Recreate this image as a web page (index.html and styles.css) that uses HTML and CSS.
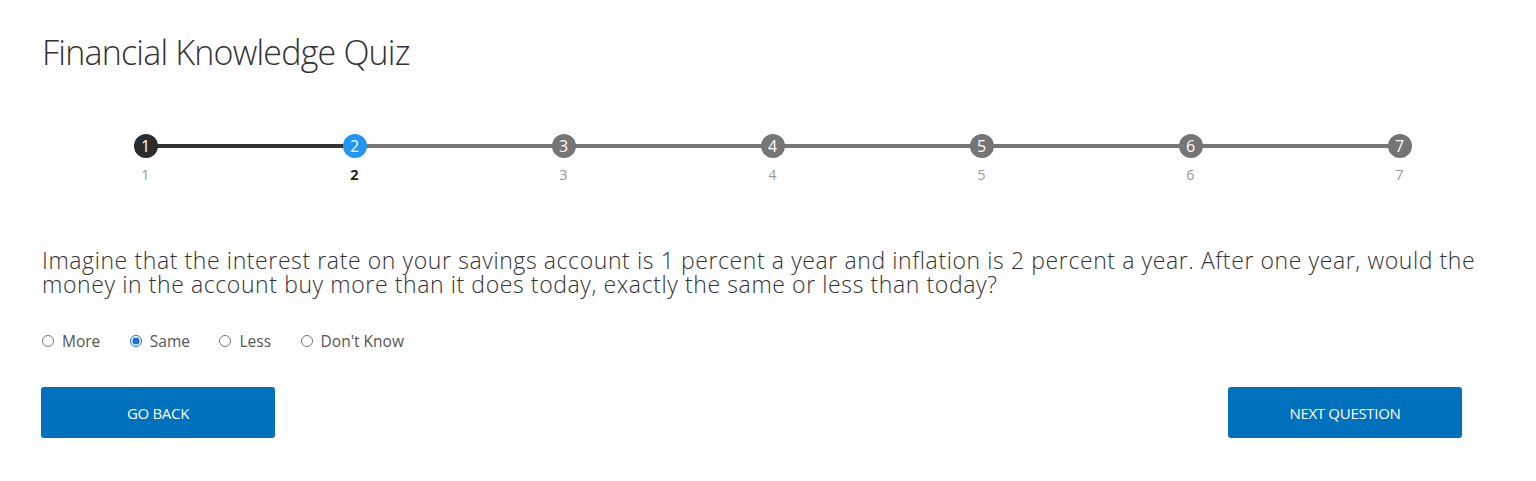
FILE: index.html
```html
<!DOCTYPE html>
<html lang="en">
<head>
<meta charset="utf-8">
<title>Financial Knowledge Quiz</title>
<link rel="stylesheet" href="styles.css">
</head>
<body>
<main class="quiz">
  <h1 class="title">Financial Knowledge Quiz</h1>

  <ol class="stepper">
    <li class="step done"><span class="dot">1</span><span class="label">1</span></li>
    <li class="step active"><span class="dot">2</span><span class="label">2</span></li>
    <li class="step"><span class="dot">3</span><span class="label">3</span></li>
    <li class="step"><span class="dot">4</span><span class="label">4</span></li>
    <li class="step"><span class="dot">5</span><span class="label">5</span></li>
    <li class="step"><span class="dot">6</span><span class="label">6</span></li>
    <li class="step last"><span class="dot">7</span><span class="label">7</span></li>
  </ol>

  <p class="question">Imagine that the interest rate on your savings account is 1 percent a year and inflation is 2 percent a year. After one year, would the money in the account buy more than it does today, exactly the same or less than today?</p>

  <div class="options">
    <label class="option"><input type="radio" name="q2" value="more"> More</label>
    <label class="option"><input type="radio" name="q2" value="same" checked> Same</label>
    <label class="option"><input type="radio" name="q2" value="less"> Less</label>
    <label class="option"><input type="radio" name="q2" value="dk"> Don't Know</label>
  </div>

  <div class="actions">
    <button class="btn" type="button">GO BACK</button>
    <button class="btn" type="button">NEXT QUESTION</button>
  </div>
</main>
</body>
</html>
```

FILE: styles.css
```css
* { box-sizing: border-box; }

html, body {
  margin: 0;
  padding: 0;
  background: #fff;
}

body {
  font-family: "Open Sans", "Liberation Sans", sans-serif;
  color: #333;
}

.quiz {
  padding: 28px 42px 0 42px;
}

.title {
  margin: 0;
  font-size: 34px;
  font-weight: 300;
  line-height: 49px;
  color: #333;
  letter-spacing: -0.8px;
}

.stepper {
  list-style: none;
  margin: 57px 0 0 -1px;
  padding: 0;
  display: flex;
  width: 1463px;
}

.step {
  position: relative;
  width: 209px;
  display: flex;
  flex-direction: column;
  align-items: center;
}

.step::after {
  content: "";
  position: absolute;
  top: 10px;
  left: 50%;
  width: 100%;
  height: 4px;
  background: #777;
}

.step.done::after { background: #333; }
.step.last::after { display: none; }

.dot {
  position: relative;
  z-index: 1;
  width: 24px;
  height: 24px;
  border-radius: 50%;
  background: #757575;
  color: #fff;
  font-size: 16px;
  line-height: 24px;
  text-align: center;
}

.step.done .dot { background: #2b2b2b; }
.step.active .dot { background: #2196f3; }

.label {
  margin-top: 7px;
  font-size: 14.5px;
  line-height: 20px;
  color: #9a9a9a;
}

.step.active .label {
  color: #222;
  font-weight: 700;
}

.question {
  margin: 63px 0 0 0;
  font-size: 23px;
  font-weight: 300;
  line-height: 24px;
  letter-spacing: 0.6px;
  color: #333;
}

.options {
  display: flex;
  gap: 29.5px;
  margin-top: 35px;
}

.option {
  display: flex;
  align-items: center;
  gap: 8px;
  font-size: 15.5px;
  line-height: 20px;
  color: #555;
}

.option input {
  margin: 0;
  width: 12px;
  height: 12px;
  accent-color: #1a6fd6;
}

.actions {
  display: flex;
  justify-content: space-between;
  margin-top: 36px;
  width: 1421px;
  margin-left: -1px;
}

.btn {
  width: 234px;
  height: 51px;
  border: none;
  border-radius: 3px;
  background: #0071bc;
  color: #fff;
  font-family: "Open Sans", "Liberation Sans", sans-serif;
  font-size: 15px;
  letter-spacing: -0.3px;
  cursor: pointer;
}
```
